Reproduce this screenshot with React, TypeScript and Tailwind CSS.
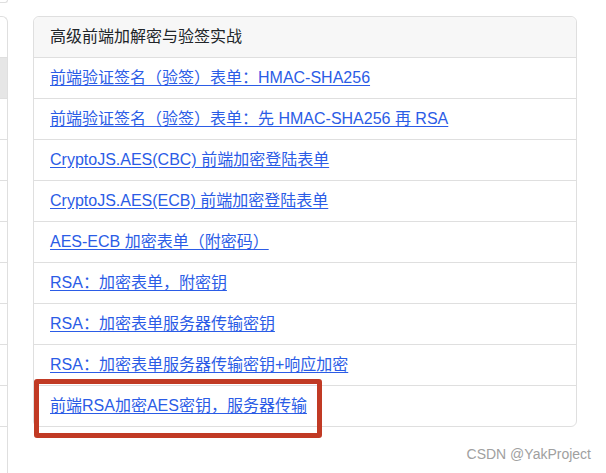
import React from 'react';

const links = [
  '前端验证签名（验签）表单：HMAC-SHA256',
  '前端验证签名（验签）表单：先 HMAC-SHA256 再 RSA',
  'CryptoJS.AES(CBC) 前端加密登陆表单',
  'CryptoJS.AES(ECB) 前端加密登陆表单',
  'AES-ECB 加密表单（附密码）',
  'RSA：加密表单，附密钥',
  'RSA：加密表单服务器传输密钥',
  'RSA：加密表单服务器传输密钥+响应加密',
  '前端RSA加密AES密钥，服务器传输',
];

const font = { fontFamily: '"Liberation Sans", "Noto Sans CJK SC", sans-serif' };

export default function App() {
  return (
    <div className="relative w-[606px] h-[473px] overflow-hidden bg-white" style={font}>
      <div className="flex h-full">
        {/* Left column, mostly cut off */}
        <div className="w-[8px] shrink-0 flex flex-col">
          <div className="h-[3px] border-r border-b border-[#dfdfdf] rounded-br-md" />
          <div className="mt-[13px] flex-1 border-t border-r border-[#dfdfdf] rounded-tr-md">
            <div className="h-[40px]" />
            <div className="h-[41px] bg-[#e6e6e6] border-t border-[#dfdfdf]" />
            {Array.from({ length: 9 }).map((_, i) => (
              <div key={i} className="h-[41px] border-t border-[#dfdfdf]" />
            ))}
          </div>
        </div>

        {/* Main card */}
        <div className="ml-[25px] mt-[16px] w-[544px] self-start border border-[#dfdfdf] rounded-md">
          <div className="h-[40px] px-4 flex items-center bg-[#f7f7f7] text-[16px] text-[#212529] rounded-t-md">
            高级前端加解密与验签实战
          </div>
          {links.map((t) => (
            <div key={t} className="h-[41px] px-4 flex items-center border-t border-[#dfdfdf]">
              <a href="#" className="text-[16px] text-[#2b5ce6] underline underline-offset-2">
                {t}
              </a>
            </div>
          ))}
        </div>
      </div>

      {/* Annotation box */}
      <div className="absolute left-[34px] top-[379px] w-[288px] h-[59px] border-[5px] border-[#c13a24] rounded-[3px]" />

      {/* Watermark */}
      <div className="absolute right-[15px] bottom-[8px] text-[14px] text-[#a0a0a0]">CSDN @YakProject</div>
    </div>
  );
}
